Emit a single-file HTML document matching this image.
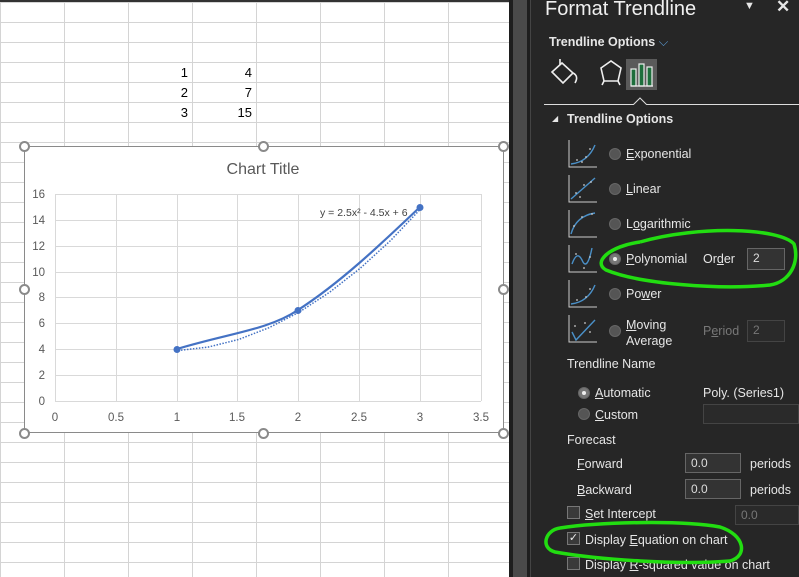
<!DOCTYPE html>
<html><head><meta charset="utf-8"><style>
*{margin:0;padding:0;box-sizing:border-box}
body{width:799px;height:577px;overflow:hidden;position:relative;background:#fff;font-family:"Liberation Sans",sans-serif}
.sheet{position:absolute;left:0;top:0;width:509px;height:577px;background:#fff;
background-image:linear-gradient(to right,#d4d4d4 1px,transparent 1px),linear-gradient(to bottom,#d4d4d4 1px,transparent 1px);
background-size:64px 20px;background-position:0 2px,0 2px}
.topbar{position:absolute;left:0;top:0;width:509px;height:2px;background:#333}
.cell{position:absolute;font-size:13px;color:#000;text-align:right;width:60px}
.chart{position:absolute;left:24px;top:146px;width:480px;height:287px;background:#fff;border:1px solid #8a8a8a}
.h{position:absolute;width:11px;height:11px;border:2px solid #8a8a8a;border-radius:50%;background:#fff}
.panel{position:absolute;left:509px;top:0;width:290px;height:577px;background:#262626;color:#e6e6e6;font-family:"Liberation Sans",sans-serif;font-size:12.5px}
.t{position:absolute;white-space:nowrap}
.rad{position:absolute;width:12px;height:12px;border-radius:50%;background:#555;border:1px solid #666}
.box{position:absolute;border:1px solid #666;background:#333;color:#ddd;font-size:12px;padding:2px 5px}
.cb{position:absolute;width:13px;height:13px;border:1px solid #777;background:#3a3a3a}
u{text-decoration:underline}
</style></head><body>
<div class="sheet"></div><div class="topbar"></div>
<div class="cell" style="left:128px;top:65px">1</div>
<div class="cell" style="left:192px;top:65px">4</div>
<div class="cell" style="left:128px;top:85px">2</div>
<div class="cell" style="left:192px;top:85px">7</div>
<div class="cell" style="left:128px;top:105px">3</div>
<div class="cell" style="left:192px;top:105px">15</div>
<div class="chart"></div>
<svg style="position:absolute;left:0;top:0" width="509" height="577">
<text x="263" y="174" font-family="Liberation Sans" font-size="16" fill="#595959" text-anchor="middle">Chart Title</text>
<g stroke="#d9d9d9" stroke-width="1">
<line x1="55" y1="194.5" x2="481" y2="194.5"/><line x1="55" y1="220.5" x2="481" y2="220.5"/><line x1="55" y1="246.5" x2="481" y2="246.5"/><line x1="55" y1="272.5" x2="481" y2="272.5"/><line x1="55" y1="297.5" x2="481" y2="297.5"/><line x1="55" y1="323.5" x2="481" y2="323.5"/><line x1="55" y1="349.5" x2="481" y2="349.5"/><line x1="55" y1="375.5" x2="481" y2="375.5"/><line x1="55" y1="401.5" x2="481" y2="401.5"/>
<line x1="55.5" y1="194" x2="55.5" y2="401"/><line x1="116.5" y1="194" x2="116.5" y2="401"/><line x1="177.5" y1="194" x2="177.5" y2="401"/><line x1="237.5" y1="194" x2="237.5" y2="401"/><line x1="298.5" y1="194" x2="298.5" y2="401"/><line x1="359.5" y1="194" x2="359.5" y2="401"/><line x1="420.5" y1="194" x2="420.5" y2="401"/><line x1="481.5" y1="194" x2="481.5" y2="401"/>
</g>
<g font-family="Liberation Sans" font-size="11.5" fill="#595959" text-anchor="end">
<text x="45" y="198">16</text><text x="45" y="224">14</text><text x="45" y="250">12</text><text x="45" y="276">10</text><text x="45" y="301">8</text><text x="45" y="327">6</text><text x="45" y="353">4</text><text x="45" y="379">2</text><text x="45" y="405">0</text>
</g>
<g font-family="Liberation Sans" font-size="11.5" fill="#595959" text-anchor="middle">
<text x="55" y="421">0</text><text x="116" y="421">0.5</text><text x="177" y="421">1</text><text x="237" y="421">1.5</text><text x="298" y="421">2</text><text x="359" y="421">2.5</text><text x="420" y="421">3</text><text x="481" y="421">3.5</text>
</g>
<path d="M177,349 L207,345.6 L237.6,338 L268,326.2 L298.4,310.5 L328.8,290.6 L359.3,266.7 L389.7,238.9 L420,207" fill="none" stroke="#4472c4" stroke-width="1.5" stroke-dasharray="1.5 1.5" transform="translate(1,1.5)"/>
<path d="M177,349 C230,333 268,330 298,310 C340,283 380,245 420,207" fill="none" stroke="#4472c4" stroke-width="2.2"/>
<circle cx="177" cy="349.5" r="3.5" fill="#4472c4"/><circle cx="298" cy="310.5" r="3.5" fill="#4472c4"/><circle cx="420" cy="207.5" r="3.5" fill="#4472c4"/>
<text x="320" y="216" font-family="Liberation Sans" font-size="10.5" fill="#404040">y = 2.5x² - 4.5x + 6</text>
</svg>
<div class="h" style="left:19px;top:141px"></div><div class="h" style="left:258px;top:141px"></div><div class="h" style="left:498px;top:141px"></div>
<div class="h" style="left:19px;top:284px"></div><div class="h" style="left:498px;top:284px"></div>
<div class="h" style="left:19px;top:428px"></div><div class="h" style="left:258px;top:428px"></div><div class="h" style="left:498px;top:428px"></div>

<div class="panel">
<div style="position:absolute;left:0;top:0;width:4px;height:577px;background:#1e1e1e"></div>
<div style="position:absolute;left:4px;top:0;width:14px;height:577px;background:#4a4a4a"></div>
<div style="position:absolute;left:18px;top:0;width:3px;height:577px;background:#1e1e1e"></div>
<div style="position:absolute;left:21px;top:0;width:1px;height:577px;background:#444"></div>
<div class="t" style="left:36px;top:-2px;font-size:20px;color:#f0f0f0">Format Trendline</div>
<div class="t" style="left:235px;top:0px;font-size:11px">▼</div>
<div class="t" style="left:267px;top:-3px;font-size:17px;font-weight:bold">✕</div>
<div class="t" style="left:40px;top:35px;font-weight:bold;font-size:12.5px">Trendline Options <span style="color:#5b9bd5;font-weight:normal">⌵</span></div>
<svg style="position:absolute;left:40px;top:58px" width="110" height="48">
<g fill="none" stroke="#eee" stroke-width="1.6">
<path d="M3,14 L13,5 L24,15 L14,25 Z"/><path d="M11,7 L11,1"/><path d="M24,15 Q30,18 26,25"/>
<path d="M52,10 L62,3 L72,10 L69,23 L55,23 Z"/><path d="M55,23 L53,27 M69,23 L71,27"/>
</g>
<rect x="77" y="1" width="31" height="31" fill="#5a5a5a"/>
<g fill="#1e6e3c" stroke="#eee" stroke-width="1.2"><rect x="82" y="11" width="5" height="17"/><rect x="90" y="6" width="5" height="22"/><rect x="98" y="9" width="5" height="19"/></g>
<path d="M82,28 L104,28" stroke="#eee" stroke-width="1.2"/>
</svg>
<div style="position:absolute;left:35px;top:104px;width:255px;height:1px;background:#ddd"></div>
<svg style="position:absolute;left:124px;top:96px" width="14" height="9"><path d="M0,9 L7,2 L14,9" fill="#262626" stroke="#ddd"/></svg>
<div class="t" style="left:43px;top:114px;font-size:8px">◢</div>
<div class="t" style="left:58px;top:112px;font-weight:bold">Trendline Options</div>

<svg style="position:absolute;left:59px;top:140px" width="30" height="210">
<g stroke="#ccc" stroke-width="1" fill="none">
<path d="M1,0 V27 H29"/><path d="M1,35 V62 H29"/><path d="M1,70 V97 H29"/><path d="M1,105 V132 H29"/><path d="M1,140 V167 H29"/><path d="M1,175 V202 H29"/>
</g>
<g stroke="#4a90c8" stroke-width="1.4" fill="none">
<path d="M3,24 Q20,22 27,5"/><path d="M3,59 L27,38"/><path d="M3,94 Q8,76 27,73"/><path d="M4,124 Q9,110 14,120 Q19,132 24,108"/><path d="M3,164 Q20,162 27,145"/><path d="M4,192 L8,200 L27,180"/>
</g>
<g fill="#ccc">
<circle cx="9" cy="20" r=".9"/><circle cx="18" cy="17" r=".9"/><circle cx="22" cy="9" r=".9"/><circle cx="14" cy="22" r=".9"/>
<circle cx="8" cy="53" r=".9"/><circle cx="16" cy="45" r=".9"/><circle cx="23" cy="42" r=".9"/><circle cx="12" cy="57" r=".9"/>
<circle cx="6" cy="86" r=".9"/><circle cx="14" cy="77" r=".9"/><circle cx="24" cy="74" r=".9"/>
<circle cx="8" cy="114" r=".9"/><circle cx="16" cy="128" r=".9"/><circle cx="22" cy="117" r=".9"/>
<circle cx="9" cy="160" r=".9"/><circle cx="18" cy="157" r=".9"/><circle cx="22" cy="149" r=".9"/>
<circle cx="7" cy="186" r=".9"/><circle cx="17" cy="183" r=".9"/><circle cx="22" cy="192" r=".9"/>
</g>
</svg>
<div class="rad" style="left:100px;top:148px"></div><div class="t" style="left:117px;top:147px"><u>E</u>xponential</div>
<div class="rad" style="left:100px;top:183px"></div><div class="t" style="left:117px;top:182px"><u>L</u>inear</div>
<div class="rad" style="left:100px;top:218px"></div><div class="t" style="left:117px;top:217px">L<u>o</u>garithmic</div>
<div class="rad" style="left:100px;top:253px;background:#777"><div style="position:absolute;left:3px;top:3px;width:4px;height:4px;border-radius:50%;background:#eee"></div></div>
<div class="t" style="left:117px;top:252px"><u>P</u>olynomial</div>
<div class="t" style="left:194px;top:252px">Or<u>d</u>er</div>
<div class="box" style="left:238px;top:248px;width:38px;height:22px">2</div>
<div class="rad" style="left:100px;top:288px"></div><div class="t" style="left:117px;top:287px">Po<u>w</u>er</div>
<div class="rad" style="left:100px;top:325px"></div><div class="t" style="left:117px;top:317px;line-height:16px"><u>M</u>oving<br>Average</div>
<div class="t" style="left:194px;top:324px;color:#777">P<u>e</u>riod</div>
<div class="box" style="left:238px;top:320px;width:38px;height:22px;color:#777;border-color:#444;background:#2a2a2a">2</div>
<div class="t" style="left:58px;top:357px">Trendline Name</div>
<div class="rad" style="left:69px;top:387px;background:#777"><div style="position:absolute;left:3px;top:3px;width:4px;height:4px;border-radius:50%;background:#eee"></div></div>
<div class="t" style="left:86px;top:386px"><u>A</u>utomatic</div>
<div class="t" style="left:194px;top:386px">Poly. (Series1)</div>
<div class="rad" style="left:69px;top:408px"></div><div class="t" style="left:86px;top:408px"><u>C</u>ustom</div>
<div class="box" style="left:194px;top:404px;width:96px;height:20px;background:#2a2a2a;border-color:#444"></div>
<div class="t" style="left:58px;top:433px">Forecast</div>
<div class="t" style="left:68px;top:457px"><u>F</u>orward</div>
<div class="box" style="left:176px;top:453px;width:56px;height:20px">0.0</div>
<div class="t" style="left:241px;top:457px">periods</div>
<div class="t" style="left:68px;top:483px"><u>B</u>ackward</div>
<div class="box" style="left:176px;top:479px;width:56px;height:20px">0.0</div>
<div class="t" style="left:241px;top:483px">periods</div>
<div class="cb" style="left:58px;top:506px"></div><div class="t" style="left:76px;top:507px"><u>S</u>et Intercept</div>
<div class="box" style="left:226px;top:505px;width:64px;height:20px;color:#777;border-color:#444;background:#2a2a2a">0.0</div>
<div class="cb" style="left:58px;top:532px;font-size:11px;line-height:11px;text-align:center;color:#eee">✓</div><div class="t" style="left:76px;top:533px">Display <u>E</u>quation on chart</div>
<div class="cb" style="left:58px;top:557px"></div><div class="t" style="left:76px;top:558px">Display <u>R</u>-squared value on chart</div>
</div>
<svg style="position:absolute;left:0;top:0;pointer-events:none" width="799" height="577">
<path d="M640,242 C700,225 780,228 794,244 C800,262 790,282 770,285 C720,290 640,284 606,270 C592,262 610,246 640,242" fill="none" stroke="#22dd11" stroke-width="3.5"/>
<path d="M560,528 C600,522 680,520 720,527 C745,535 748,556 730,561 C680,565 600,560 555,552 C540,548 545,530 560,528" fill="none" stroke="#22dd11" stroke-width="3.5"/>
</svg>
</body></html>
